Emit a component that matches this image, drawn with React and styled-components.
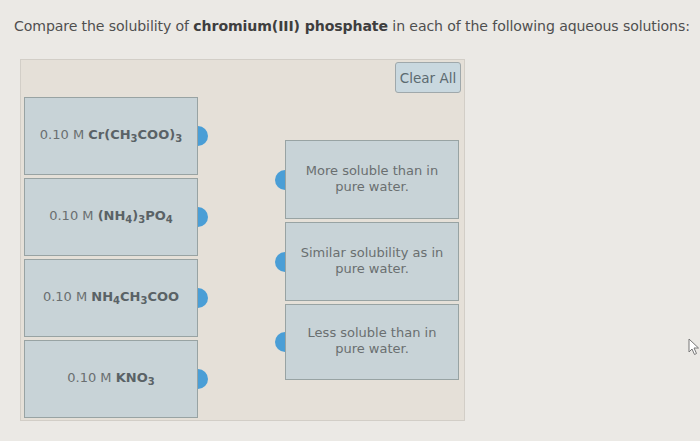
import React from "react";
import styled, { createGlobalStyle } from "styled-components";

const Global = createGlobalStyle`
  html, body { margin: 0; padding: 0; }
  body {
    width: 700px; height: 441px; overflow: hidden;
    background: #ebe9e5;
    font-family: "DejaVu Sans", Verdana, sans-serif;
  }
`;

const Page = styled.div`
  position: relative;
  width: 700px;
  height: 441px;
  padding: 18px 0 0 14px;
  box-sizing: border-box;
`;

const Title = styled.p`
  margin: 0;
  font-size: 14.1px;
  line-height: 17px;
  letter-spacing: -0.1px;
  color: #4f4f4f;
  white-space: nowrap;
  b { color: #3e3e3e; }
`;

const Panel = styled.div`
  margin: 24px 0 0 6px;
  width: 445px;
  height: 362px;
  box-sizing: border-box;
  background: #e5e0d8;
  border: 1px solid #d2cec7;
  display: flex;
  justify-content: space-between;
  padding: 2px 3px 0 3px;
`;

const LeftCol = styled.div`
  display: flex;
  flex-direction: column;
  gap: 3px;
  padding-top: 35px;
`;

const RightCol = styled.div`
  display: flex;
  flex-direction: column;
  align-items: flex-end;
`;

const ClearButton = styled.button`
  width: 66px;
  height: 31px;
  box-sizing: border-box;
  border: 1px solid #9fa8ab;
  border-radius: 3px;
  background: #c9d8df;
  color: #5c6a70;
  font-family: "DejaVu Sans", Verdana, sans-serif;
  font-size: 13.5px;
  padding: 0;
  margin-bottom: 47px;
`;

const RightCards = styled.div`
  display: flex;
  flex-direction: column;
  gap: 3px;
  margin-right: 2px;
`;

const Card = styled.div`
  position: relative;
  width: 174px;
  height: ${(p) => p.h || 78}px;
  box-sizing: border-box;
  background: #c8d3d7;
  border: 1px solid #98a3a3;
  display: flex;
  align-items: center;
  justify-content: center;
  text-align: center;
  color: #6a6f70;
  font-size: 13px;
  line-height: 16px;
  padding: 0 ${(p) => p.px || 8}px;
  b { color: #5a6266; }
  sub { font-size: 10px; vertical-align: -3px; line-height: 0; }
`;

const CardText = styled.span`
  margin-top: ${(p) => p.shift || 0}px;
`;

const Tab = styled.span`
  position: absolute;
  top: 50%;
  width: 10px;
  height: 20px;
  margin-top: -10px;
  background: #4a9ed6;
  ${(p) =>
    p.side === "right"
      ? "right: -11px; border-radius: 0 10px 10px 0;"
      : "left: -11px; border-radius: 10px 0 0 10px;"}
`;

const Cursor = styled.svg`
  position: absolute;
  left: 688px;
  top: 338px;
`;

const left = [
  <>0.10 M <b>Cr(CH<sub>3</sub>COO)<sub>3</sub></b></>,
  <>0.10 M <b>(NH<sub>4</sub>)<sub>3</sub>PO<sub>4</sub></b></>,
  <>0.10 M <b>NH<sub>4</sub>CH<sub>3</sub>COO</b></>,
  <>0.10 M <b>KNO<sub>3</sub></b></>,
];

const right = [
  "More soluble than in pure water.",
  "Similar solubility as in pure water.",
  "Less soluble than in pure water.",
];

export default function App() {
  return (
    <>
      <Global />
      <Page>
        <Title>
          Compare the solubility of <b>chromium(III) phosphate</b> in each of the following aqueous solutions:
        </Title>
        <Panel>
          <LeftCol>
            {left.map((c, i) => (
              <Card key={i} px={4}>
                <CardText shift={-2}>{c}</CardText>
                <Tab side="right" />
              </Card>
            ))}
          </LeftCol>
          <RightCol>
            <ClearButton>Clear All</ClearButton>
            <RightCards>
              {right.map((t, i) => (
                <Card key={i} h={i === 2 ? 76 : 79} px={12}>
                  <CardText shift={-2}>{t}</CardText>
                  <Tab side="left" />
                </Card>
              ))}
            </RightCards>
          </RightCol>
        </Panel>
        <Cursor width="12" height="18" viewBox="0 0 12 18">
          <path d="M1 1 L1 14 L4 11 L6.5 16.5 L8.5 15.5 L6 10 L10.5 10 Z" fill="#fff" stroke="#777" strokeWidth="1" />
        </Cursor>
      </Page>
    </>
  );
}
